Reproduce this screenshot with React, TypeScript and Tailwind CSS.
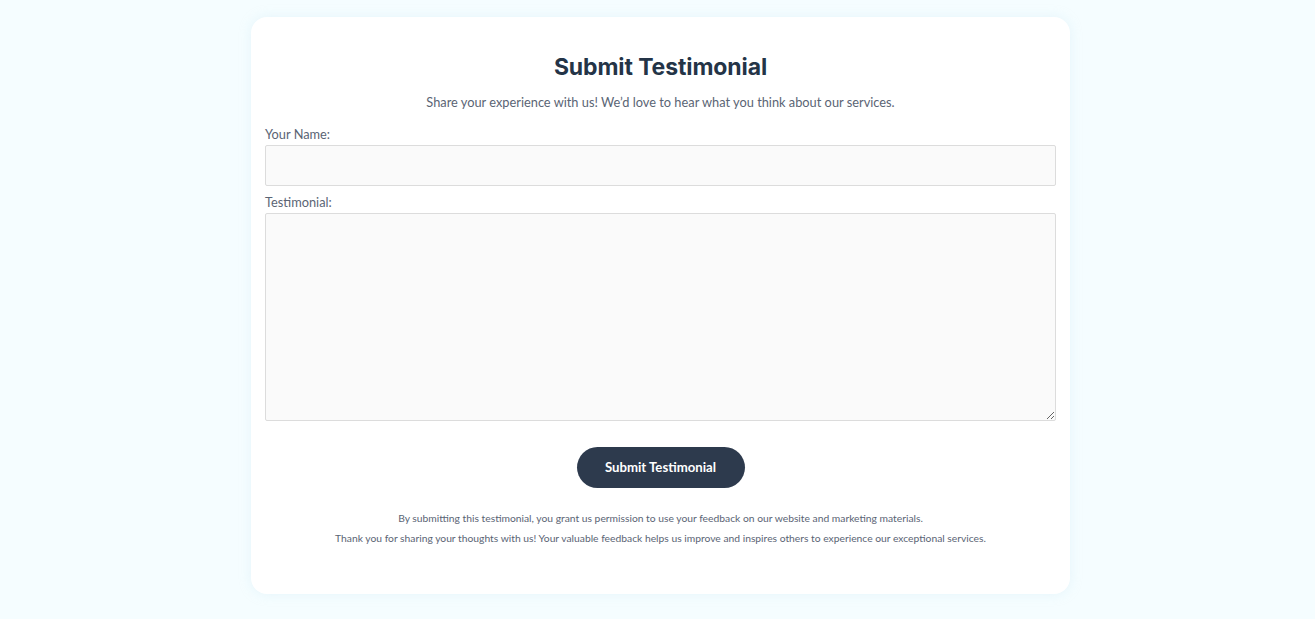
export default function App() {
    return (
        <div className="min-h-[619px] bg-[#f5fdff] pt-[17px] pb-[26px] pl-[6px] flex justify-center items-start font-['Lato','Open_Sans',sans-serif]">
            <div className="w-[819px] bg-white rounded-2xl shadow-[0_0_12px_rgba(200,230,240,0.35)] px-[14px] pt-[35px] pb-[46px]">
                <h1 className="text-center text-[23px] leading-[30px] font-bold text-[#243447] font-['Inter',sans-serif] tracking-[-0.1px]">
                    Submit Testimonial
                </h1>
                <p className="text-center text-[12.8px] text-[#5a6474] mt-[10px] leading-[20px]">
                    Share your experience with us! We’d love to hear what you think about our services.
                </p>
                <form className="mt-[14px] flex flex-col text-left" onSubmit={(e) => e.preventDefault()}>
                    <label htmlFor="name" className="text-[12.8px] leading-[17px] text-[#5a6474]">
                        Your Name:
                    </label>
                    <input
                        id="name"
                        type="text"
                        className="mt-[2px] h-[41px] bg-[#fafafa] border border-[#dcdcdc] rounded-[2px] px-3 focus:outline-none"
                    />
                    <label htmlFor="testimonial" className="mt-[8px] text-[12.8px] leading-[17px] text-[#5a6474]">
                        Testimonial:
                    </label>
                    <textarea
                        id="testimonial"
                        className="mt-[2px] h-[208px] bg-[#fafafa] border border-[#dcdcdc] rounded-[2px] px-3 py-2 focus:outline-none"
                    />
                    <div className="flex justify-center mt-[26px]">
                        <button
                            type="submit"
                            className="w-[168px] h-[41px] rounded-full bg-[#2d3a4d] text-white text-[13.2px] font-bold"
                        >
                            Submit Testimonial
                        </button>
                    </div>
                </form>
                <div className="mt-[20px] text-center text-[10.3px] leading-[20px] text-[#5a6474]">
                    <p>By submitting this testimonial, you grant us permission to use your feedback on our website and marketing materials.</p>
                    <p>Thank you for sharing your thoughts with us! Your valuable feedback helps us improve and inspires others to experience our exceptional services.</p>
                </div>
            </div>
        </div>
    );
}
